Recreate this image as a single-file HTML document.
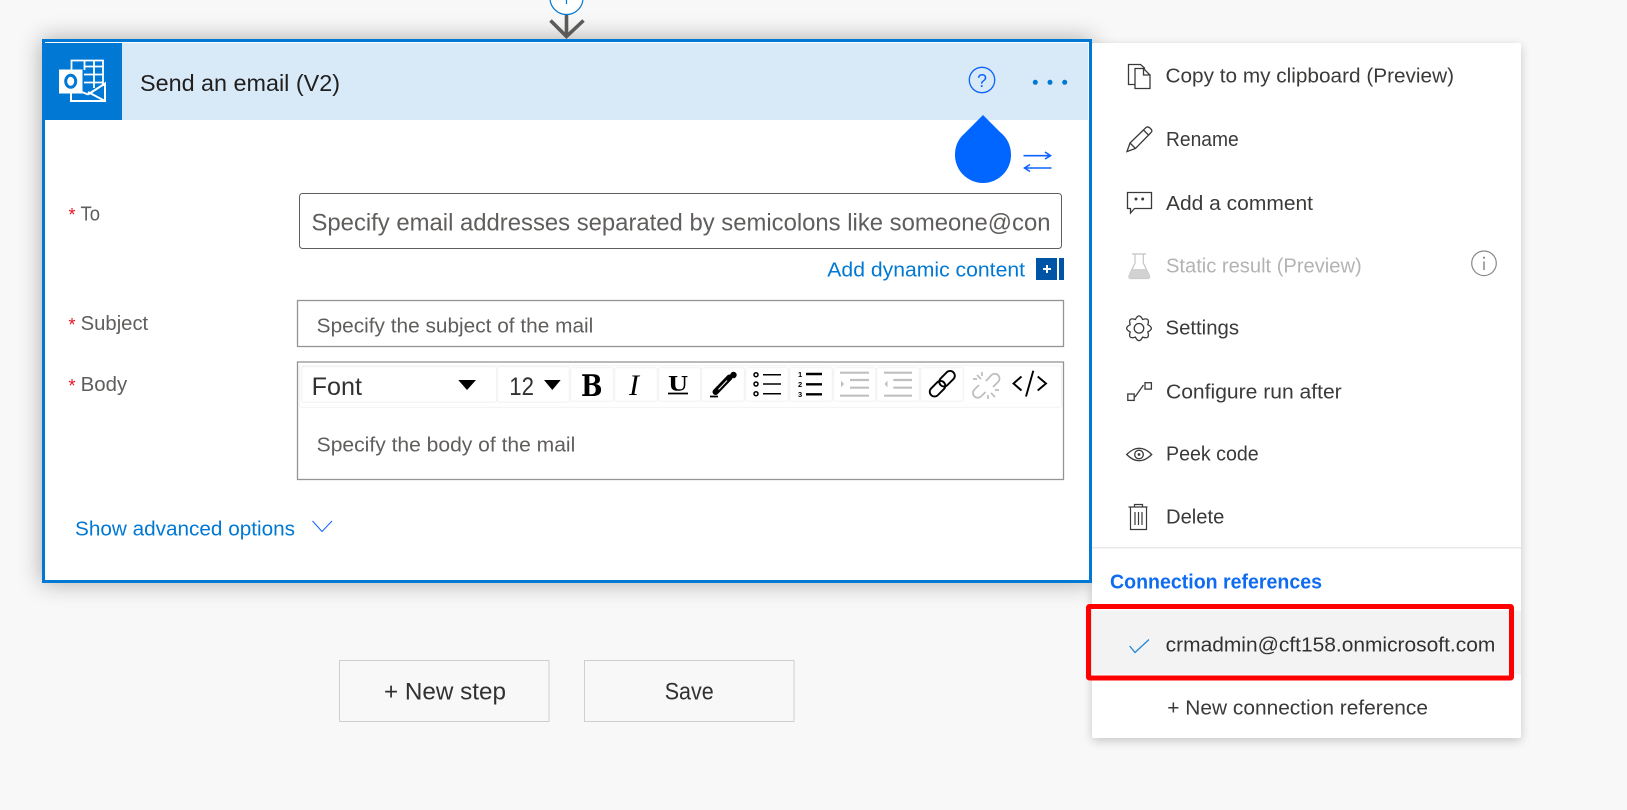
<!DOCTYPE html>
<html><head><meta charset="utf-8"><title>Send an email (V2)</title>
<style>
html,body{margin:0;padding:0;width:1627px;height:810px;overflow:hidden;background:#f8f8f8}
.card{position:absolute;left:42px;top:39px;width:1050px;height:544px;box-shadow:0 0 22px rgba(0,0,0,.32);background:#fff}
.menu{position:absolute;left:1092px;top:43px;width:429px;height:695px;background:#fff;border-radius:2px;box-shadow:0 3px 10px rgba(0,0,0,.2)}
svg{position:absolute;left:0;top:0}
text{font-family:"Liberation Sans",sans-serif}
</style></head><body>
<div class="card"></div><div class="menu"></div>
<svg width="1627" height="810" viewBox="0 0 1627 810" xmlns="http://www.w3.org/2000/svg">
<!-- connector -->
<circle cx="566.5" cy="-2" r="16.5" fill="#fff" stroke="#0078d4" stroke-width="1.2"/>
<path d="M566.5 -6V4M561 -1H572" stroke="#0078d4" stroke-width="1.2"/>
<path d="M566.5 15V36M550.5 20.5L566.5 36.5L583.5 20.5" fill="none" stroke="#5c5a58" stroke-width="3.6"/>

<!-- card -->
<rect x="43.5" y="40.5" width="1047" height="541" fill="#fff" stroke="#0078d4" stroke-width="3"/>
<rect x="122" y="43" width="966" height="77" fill="#d8e9f8"/>
<rect x="45" y="43" width="77" height="77" fill="#0078d4"/>
<!-- outlook -->
<g fill="none" stroke="#fff" stroke-width="1.8">
<path d="M71.5 70V60.5H103V86M84.5 60.5V70M94 60.5V88M84 66.5H103M84 74.5H103M84 82.5H103"/>
<path d="M71 93V101H105V83.5L88 94.5M77 90L88 94.5M105 101L88 92" stroke-width="2"/>
</g>
<rect x="59" y="69.5" width="23.5" height="24" fill="#fff"/>
<ellipse cx="70.7" cy="81.3" rx="5" ry="6" fill="none" stroke="#0078d4" stroke-width="3"/>
<text x="140" y="91" font-size="23" fill="#201f1e" textLength="200" lengthAdjust="spacingAndGlyphs">Send an email (V2)</text>

<!-- header icons -->
<circle cx="982" cy="80" r="12.7" fill="none" stroke="#0f62fe" stroke-width="1.3"/>
<text x="977" y="87" font-size="18" fill="#0f62fe" textLength="10" lengthAdjust="spacingAndGlyphs">?</text>
<circle cx="1035.3" cy="82.3" r="2.5" fill="#0078d4"/><circle cx="1050" cy="82.3" r="2.5" fill="#0078d4"/><circle cx="1064.7" cy="82.3" r="2.5" fill="#0078d4"/>
<path d="M983 115L1000 132Q1011 141 1011 155A28 28 0 1 1 955 155Q955 142 964 134Z" fill="#0066ff"/>
<path d="M1023.5 155.7H1050.5M1045 152L1050.5 155.7L1045 159M1051.5 168H1024.5M1030 164.5L1024.5 168L1030 171.5" fill="none" stroke="#0f62fe" stroke-width="1.6"/>

<!-- To -->
<text x="68.5" y="221" font-size="18" fill="#e81123">*</text>
<text x="80.5" y="220.7" font-size="20" fill="#605e5c" textLength="19.5" lengthAdjust="spacingAndGlyphs">To</text>
<rect x="299.5" y="193.5" width="762" height="55" rx="3" fill="#fff" stroke="#605e5c"/>
<text x="311.5" y="230.5" font-size="24" fill="#605e5c" textLength="739" lengthAdjust="spacingAndGlyphs">Specify email addresses separated by semicolons like someone@con</text>
<text x="827.3" y="276.7" font-size="20" fill="#0078d4" textLength="197.7" lengthAdjust="spacingAndGlyphs">Add dynamic content</text>
<rect x="1036" y="258" width="21" height="22" fill="#0054a6"/><rect x="1059" y="258" width="5" height="22" fill="#0054a6"/>
<path d="M1043 269H1051M1047 265V273" stroke="#fff" stroke-width="2"/>

<!-- Subject -->
<text x="68.5" y="331" font-size="18" fill="#e81123">*</text>
<text x="80.7" y="330" font-size="20" fill="#605e5c" textLength="67.5" lengthAdjust="spacingAndGlyphs">Subject</text>
<rect x="297.5" y="300.5" width="766" height="46" fill="#fff" stroke="#949494" stroke-width="1.3"/>
<text x="316.7" y="332.7" font-size="20" fill="#605e5c" textLength="276.6" lengthAdjust="spacingAndGlyphs">Specify the subject of the mail</text>

<!-- Body -->
<text x="68.5" y="392" font-size="18" fill="#e81123">*</text>
<text x="80.7" y="391" font-size="20" fill="#605e5c" textLength="46.5" lengthAdjust="spacingAndGlyphs">Body</text>
<rect x="297.5" y="362" width="766" height="117.5" fill="#fff" stroke="#949494" stroke-width="1.3"/>
<rect x="299.5" y="365.7" width="762" height="41.5" rx="2" fill="#fff" stroke="#f2f2f2"/>
<g fill="#fff" stroke="#f2f2f2">
<rect x="301.7" y="366.7" width="195" height="35.6" rx="2"/>
<rect x="497.7" y="366.7" width="71.6" height="35.6" rx="2"/>
<rect x="570.7" y="367.7" width="42.6" height="33.6" rx="2"/>
<rect x="614.7" y="367.7" width="42.6" height="33.6" rx="2"/>
<rect x="658.7" y="367.7" width="42" height="33.6" rx="2"/>
<rect x="701.7" y="367.7" width="42.6" height="33.6" rx="2"/>
<rect x="745.7" y="367.7" width="42.6" height="33.6" rx="2"/>
<rect x="789.7" y="367.7" width="42.6" height="33.6" rx="2"/>
<rect x="833.7" y="367.7" width="42" height="33.6" rx="2"/>
<rect x="876.7" y="367.7" width="42.6" height="33.6" rx="2"/>
<rect x="920.7" y="367.7" width="42.6" height="33.6" rx="2"/>
</g>
<text x="311.7" y="395" font-size="25" fill="#323130" textLength="50.3" lengthAdjust="spacingAndGlyphs">Font</text>
<path d="M458.3 380H476L467 390Z" fill="#000"/>
<text x="509.3" y="395" font-size="25" fill="#323130" textLength="24.7" lengthAdjust="spacingAndGlyphs">12</text>
<path d="M544 380H560.7L552.3 390Z" fill="#000"/>
<text x="581" y="396" font-size="30" font-weight="bold" style="font-family:'DejaVu Serif',serif" fill="#000" textLength="21.5" lengthAdjust="spacingAndGlyphs">B</text>
<!-- italic I drawn as glyph text in regular weight -->
<text x="629" y="395" font-size="30" font-style="italic" style="font-family:'Liberation Serif',serif" fill="#000" textLength="12.5" lengthAdjust="spacing">I</text>
<text x="668" y="390.5" font-size="20" font-weight="bold" style="font-family:'DejaVu Serif',serif" fill="#000" textLength="20" lengthAdjust="spacingAndGlyphs">U</text>
<path d="M668 393.5H688" stroke="#000" stroke-width="1.8"/>
<!-- dropper -->
<path d="M715.5 392L729.5 377.5" stroke="#000" stroke-width="6" stroke-linecap="round"/>
<path d="M718.5 389.5L727 380.5" stroke="#fff" stroke-width="1"/>
<circle cx="733.5" cy="375" r="3.2" fill="#000"/><path d="M710 396.5H718" stroke="#000" stroke-width="1.8"/>
<!-- bullets -->
<g fill="none" stroke="#000" stroke-width="1.5"><circle cx="756" cy="374.7" r="2"/><circle cx="756" cy="384" r="2"/><circle cx="756" cy="393.7" r="2"/></g>
<path d="M763 374.7H781M763 384H781M763 393.7H781" stroke="#000" stroke-width="1.5"/>
<!-- numbers -->
<path d="M806 374H822M806 384.3H822M806 394.3H822" stroke="#000" stroke-width="2.4"/>
<text x="798" y="377" font-size="7.5" font-weight="bold" fill="#000">1</text><text x="798" y="387" font-size="7.5" font-weight="bold" fill="#000">2</text><text x="798" y="397" font-size="7.5" font-weight="bold" fill="#000">3</text>
<!-- indent / outdent -->
<path d="M840 372.7H869M850 380H869M850 387.7H869M840 395.7H869M884 372.7H912M893.3 380H912M893.3 387.7H912M884 395.7H912" stroke="#c0c0c0" stroke-width="2.2"/>
<path d="M841 380.5L844 384L841 387.5ZM887.5 380.5L884.5 384L887.5 387.5Z" fill="#c0c0c0"/>
<!-- link -->
<g fill="none" stroke="#000" stroke-width="1.9">
<rect x="928.5" y="384" width="18" height="9.5" rx="4.7" transform="rotate(-45 937.5 388.7)"/>
<rect x="938" y="374" width="18" height="9.5" rx="4.7" transform="rotate(-45 947 378.7)"/>
</g>
<!-- unlink -->
<g fill="none" stroke="#bdbdbd" stroke-width="1.7">
<path d="M979 385L974.5 389.5A4.7 4.7 0 0 0 981 396.5L985.5 392"/>
<path d="M986 381L991.5 375A4.7 4.7 0 0 1 998 382L993 387"/>
<path d="M977 375L981 379M982 372V376M973 379H977M991 393L995 397M988 395V399M995 390H999"/>
</g>
<!-- code -->
<path d="M1021.5 376.5L1013.5 383.5L1021.5 390.5M1037.7 376.5L1046 383.5L1037.7 390.5M1033.3 370.7L1026 396.5" fill="none" stroke="#000" stroke-width="1.9"/>

<text x="316.7" y="451.5" font-size="20" fill="#605e5c" textLength="258.6" lengthAdjust="spacingAndGlyphs">Specify the body of the mail</text>
<text x="75" y="535.7" font-size="20" fill="#0078d4" textLength="220" lengthAdjust="spacingAndGlyphs">Show advanced options</text>
<path d="M312.5 521L322 531.5L332 521" fill="none" stroke="#0f62fe" stroke-width="1"/>

<!-- buttons -->
<rect x="339.5" y="660.5" width="209.5" height="61" fill="#f8f8f8" stroke="#cfcfcf"/>
<rect x="584.5" y="660.5" width="209.5" height="61" fill="#f8f8f8" stroke="#cfcfcf"/>
<text x="384" y="699.5" font-size="24" fill="#323130" textLength="122" lengthAdjust="spacingAndGlyphs">+ New step</text>
<text x="664.7" y="699.5" font-size="24" fill="#323130" textLength="49" lengthAdjust="spacingAndGlyphs">Save</text>

<!-- menu text -->
<g font-size="20" fill="#3b3a39">
<text x="1165.5" y="82.7" textLength="288.5" lengthAdjust="spacingAndGlyphs">Copy to my clipboard (Preview)</text>
<text x="1166" y="146" textLength="72.7" lengthAdjust="spacingAndGlyphs">Rename</text>
<text x="1166" y="210" textLength="147" lengthAdjust="spacingAndGlyphs">Add a comment</text>
<text x="1166" y="272.7" fill="#b3b3b3" textLength="195.7" lengthAdjust="spacingAndGlyphs">Static result (Preview)</text>
<text x="1165.5" y="334.7" textLength="73.5" lengthAdjust="spacingAndGlyphs">Settings</text>
<text x="1166" y="398.7" textLength="175.7" lengthAdjust="spacingAndGlyphs">Configure run after</text>
<text x="1166" y="460.7" textLength="92.7" lengthAdjust="spacingAndGlyphs">Peek code</text>
<text x="1166" y="523.3" textLength="58.3" lengthAdjust="spacingAndGlyphs">Delete</text>
</g>
<!-- menu icons -->
<g fill="none" stroke="#3b3a39" stroke-width="1.3">
<path d="M1135 84.5H1128.5V64.5H1140.5L1145 68.5"/>
<path d="M1135 68.5V88.5H1150V75L1143.5 68.5ZM1143.5 68.5V75H1150"/>
<path d="M1127 151.5L1130 143L1146 127.5Q1148 126 1150.5 128.5T1151 132.5L1135.5 148.5ZM1130 143L1135.5 148.5M1143.5 130L1148.5 135"/>
<path d="M1127.5 192.5H1151.5V208.5H1134.5L1130.5 213V208.5H1127.5Z"/>
<path d="M1128.5 507H1147.5M1134.5 507V504.5H1142.5V507M1130.5 507V529.5H1146.5V507M1135 512V525M1138.5 512V525M1142 512V525" stroke-width="1.2"/>
<g transform="translate(1139 328.3)"><path d="M8.78 3.64Q11.3 11.3 3.64 8.78Q0 16 -3.64 8.78Q-11.3 11.3 -8.78 3.64Q-16 0 -8.78 -3.64Q-11.3 -11.3 -3.64 -8.78Q0 -16 3.64 -8.78Q11.3 -11.3 8.78 -3.64Q16 0 8.78 3.64Z"/><circle r="4.8"/></g>
<rect x="1127.8" y="394" width="6.4" height="6.4"/><rect x="1145" y="382.7" width="6.4" height="6.4"/><path d="M1135 397L1143.5 385"/>
<path d="M1126.7 454.5Q1139 442 1151.7 454.5Q1139 467 1126.7 454.5Z"/><circle cx="1139" cy="454.5" r="4.3"/>
</g>
<circle cx="1136" cy="199" r="1.5" fill="#3b3a39"/><circle cx="1142.7" cy="199" r="1.5" fill="#3b3a39"/><circle cx="1139" cy="454.5" r="1.4" fill="#3b3a39"/>
<!-- flask -->
<path d="M1132 254H1146M1135 254V263L1129 276Q1128.5 278.5 1131 278.5H1147.5Q1150 278.5 1149.5 276L1143.3 263V254" fill="none" stroke="#c4c4c4" stroke-width="1.2"/>
<path d="M1132.5 269H1146L1149.5 276Q1150 278.5 1147.5 278.5H1131Q1128.5 278.5 1129 276Z" fill="#d2d2d2"/>
<circle cx="1484" cy="263.3" r="12.3" fill="none" stroke="#8a8886" stroke-width="1.2"/>
<path d="M1484 261.5V270" stroke="#8a8886" stroke-width="1.5"/><circle cx="1484" cy="257.7" r="1.1" fill="#8a8886"/>

<rect x="1092" y="547" width="429" height="1.5" fill="#e8e8e8"/>
<text x="1110" y="588.7" font-size="20" font-weight="bold" fill="#0f6cf0" textLength="212" lengthAdjust="spacingAndGlyphs">Connection references</text>
<rect x="1092" y="610.5" width="429" height="64" fill="#f3f3f3"/>
<rect x="1088.5" y="606.5" width="423" height="71.5" rx="1" fill="none" stroke="#ff0000" stroke-width="5"/>
<path d="M1129.7 646L1135 652.5L1149 639.5" fill="none" stroke="#2488d8" stroke-width="1.3"/>
<text x="1165.7" y="651.7" font-size="20" fill="#323130" textLength="329.6" lengthAdjust="spacingAndGlyphs">crmadmin@cft158.onmicrosoft.com</text>
<text x="1167.3" y="714.7" font-size="20" fill="#3b3a39" textLength="260.7" lengthAdjust="spacingAndGlyphs">+ New connection reference</text>
</svg>
</body></html>
